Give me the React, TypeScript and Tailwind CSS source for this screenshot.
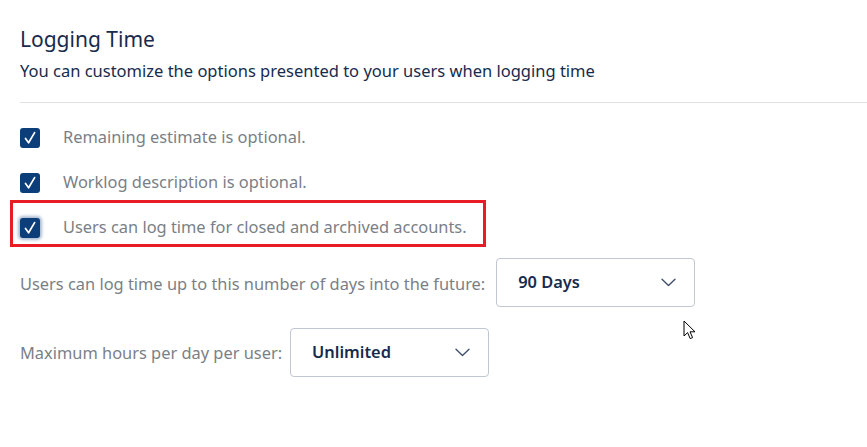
const font = { fontFamily: '"Noto Sans", "Open Sans", sans-serif' };

function Check({ focused }: { focused?: boolean }) {
    return (
        <span
            className={
                "flex h-[20px] w-[20px] shrink-0 items-center justify-center rounded-[3px] bg-[#0c3e7a] " +
                (focused ? "shadow-[0_0_3px_2px_rgba(12,62,122,0.35)]" : "")
            }
        >
            <svg width="20" height="20" viewBox="0 0 20 20" fill="none">
                <path d="M5.5 10.5 8.6 14.8 14.6 4.6" stroke="white" strokeWidth="1.7" strokeLinecap="round" strokeLinejoin="round" />
            </svg>
        </span>
    );
}

function Select({ value }: { value: string }) {
    return (
        <div className="flex h-[49px] w-[199px] items-center justify-between rounded-[4px] border border-[#c1c7d0] bg-white pl-[21px] pr-[18px]">
            <span className="text-[16.4px] font-semibold text-[#172b4d]">{value}</span>
            <svg width="15" height="9" viewBox="0 0 15 9" fill="none">
                <path d="M1 1.2 7.5 7.6 14 1.2" stroke="#42526e" strokeWidth="1.4" strokeLinecap="round" strokeLinejoin="round" />
            </svg>
        </div>
    );
}

export default function App() {
    const options = [
        "Remaining estimate is optional.",
        "Worklog description is optional.",
        "Users can log time for closed and archived accounts.",
    ];

    return (
        <div className="relative h-[447px] w-[867px] overflow-hidden bg-white" style={font}>
            <div className="pl-[20px] pt-[25px]">
                <h2 className="text-[21px] leading-[28px] text-[#172b4d]">Logging Time</h2>
                <p className="mt-[6px] text-[16.5px] leading-[24px] text-[#172b4d]">
                    You can customize the options presented to your users when logging time
                </p>
                <div className="mt-[19px] border-t border-[#dfe1e6]" />

                <div className="pt-[12px]">
                    {options.map((label, i) => (
                        <div key={label} className="relative flex h-[45px] items-center gap-[23px]">
                            <Check focused={i === 2} />
                            <span className="text-[16.4px] text-[#7a7f87]">{label}</span>
                            {i === 2 && (
                                <div className="pointer-events-none absolute left-[-10px] top-[-5px] h-[47px] w-[476px] border-[3px] border-[#e81c24]" />
                            )}
                        </div>
                    ))}
                </div>

                <div className="mt-[8px] flex items-center gap-[11px]">
                    <span className="pt-[3px] text-[16.4px] text-[#7a7f87]">
                        Users can log time up to this number of days into the future:
                    </span>
                    <Select value="90 Days" />
                </div>

                <div className="mt-[21px] flex items-center gap-[8px]">
                    <span className="pt-[2px] text-[16.4px] text-[#7a7f87]">Maximum hours per day per user:</span>
                    <Select value="Unlimited" />
                </div>
            </div>

            {/* mouse pointer in the capture */}
            <svg className="absolute left-[683px] top-[320px]" width="14" height="20" viewBox="0 0 14 20">
                <path d="M1 1 L1 16 L4.6 12.6 L7.2 18.6 L9.6 17.6 L7 11.8 L12 11.8 Z" fill="white" stroke="black" strokeWidth="1" strokeLinejoin="round" />
            </svg>
        </div>
    );
}
